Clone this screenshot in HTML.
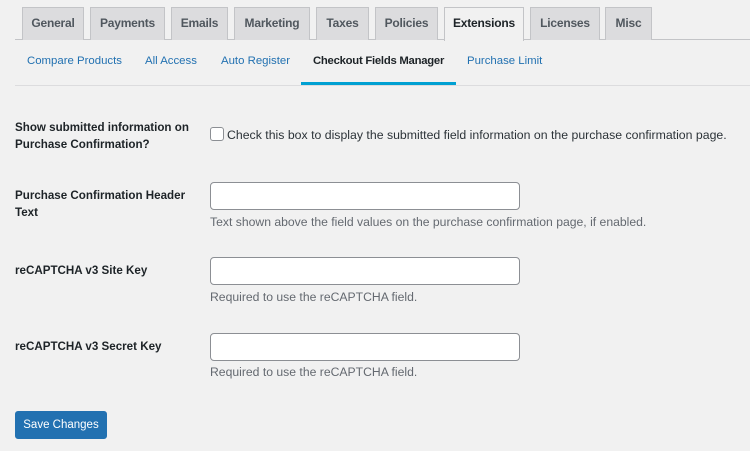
<!DOCTYPE html>
<html><head><style>
*{box-sizing:border-box;margin:0;padding:0}
body{width:750px;height:451px;background:#f1f1f1;font-family:"Liberation Sans",Arial,sans-serif;color:#1d2327;position:relative;overflow:hidden;font-size:12px}
.tab{position:absolute;top:7px;height:33px;background:#dcdcde;border:1px solid #c3c4c7;border-bottom:none;font-weight:bold;font-size:12px;letter-spacing:-0.2px;color:#50575e;text-align:center;line-height:31px}
.tab.act{background:#f1f1f1;color:#1d2327;height:34px}
.line{position:absolute;left:15px;right:0;top:39px;border-top:1px solid #c3c4c7}
.sub{position:absolute;top:55px;font-size:11.4px;color:#2271b1}
.sub.b{color:#1d2327;font-weight:bold;font-size:11.3px;letter-spacing:-0.25px}
.uline{position:absolute;left:301px;width:155px;top:82px;height:3px;background:#00a0d2}
.sline{position:absolute;left:15px;right:0;top:85px;border-top:1px solid #dcdcde}
.lab{position:absolute;left:15px;font-weight:bold;font-size:11.6px;line-height:17px;color:#1d2327}
.inp{position:absolute;left:210px;width:310px;height:28px;background:#fff;border:1px solid #8c8f94;border-radius:4px}
.desc{position:absolute;left:210px;font-size:12.2px;color:#646970}
</style></head><body>
<div class="line"></div>
<div class="tab" style="left:22px;width:62px">General</div>
<div class="tab" style="left:90px;width:75px">Payments</div>
<div class="tab" style="left:171px;width:57px">Emails</div>
<div class="tab" style="left:234px;width:76px">Marketing</div>
<div class="tab" style="left:316px;width:53px">Taxes</div>
<div class="tab" style="left:375px;width:63px">Policies</div>
<div class="tab act" style="left:444px;width:80px">Extensions</div>
<div class="tab" style="left:530px;width:70px">Licenses</div>
<div class="tab" style="left:605px;width:47px">Misc</div>
<div class="sub" style="left:27px">Compare Products</div>
<div class="sub" style="left:145px">All Access</div>
<div class="sub" style="left:221px">Auto Register</div>
<div class="sub b" style="left:313px">Checkout Fields Manager</div>
<div class="sub" style="left:467px">Purchase Limit</div>
<div class="uline"></div><div class="sline"></div>

<div class="lab" style="top:119px">Show submitted information on<br>Purchase Confirmation?</div>
<div style="position:absolute;left:210px;top:127px;width:14px;height:14px;border:1px solid #8c8f94;border-radius:3px;background:#fff"></div>
<div style="position:absolute;left:227px;top:128px;font-size:12.3px;color:#2c3338">Check this box to display the submitted field information on the purchase confirmation page.</div>

<div class="lab" style="top:187px">Purchase Confirmation Header<br>Text</div>
<div class="inp" style="top:182px"></div>
<div class="desc" style="top:215px">Text shown above the field values on the purchase confirmation page, if enabled.</div>

<div class="lab" style="top:262px">reCAPTCHA v3 Site Key</div>
<div class="inp" style="top:257px"></div>
<div class="desc" style="top:290px">Required to use the reCAPTCHA field.</div>

<div class="lab" style="top:338px">reCAPTCHA v3 Secret Key</div>
<div class="inp" style="top:333px"></div>
<div class="desc" style="top:365px">Required to use the reCAPTCHA field.</div>

<div style="position:absolute;left:15px;top:411px;width:92px;height:28px;background:#2271b1;border:1px solid #2271b1;border-radius:3px;color:#fff;font-size:11.5px;text-align:center;line-height:26px">Save Changes</div>
</body></html>
